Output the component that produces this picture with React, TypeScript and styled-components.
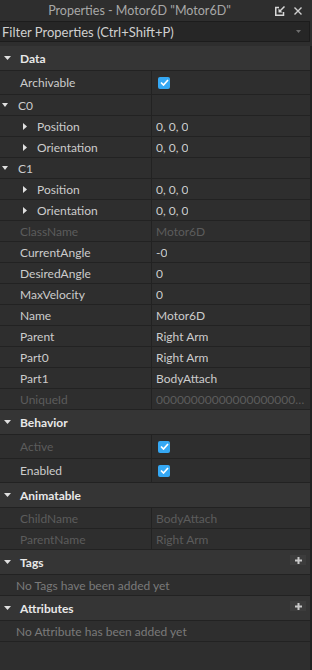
import React from "react";
import styled, { createGlobalStyle } from "styled-components";

const Global = createGlobalStyle`
  html, body { margin: 0; padding: 0; background: #2e2e2e; }
  * { box-sizing: border-box; }
`;

const FONT = `"Lato", "Open Sans", sans-serif`;

const Panel = styled.div`
  width: 312px;
  height: 670px;
  background: #2e2e2e;
  display: flex;
  flex-direction: column;
  font-family: ${FONT};
  font-size: 12px;
  color: #cccccc;
  overflow: hidden;
`;

const TitleBar = styled.div`
  height: 21px;
  display: flex;
  align-items: center;
  background: #2e2e2e;
`;

const Title = styled.div`
  flex: 1;
  text-align: center;
  color: #a8a8a8;
  font-size: 12.5px;
  padding-left: 4px;
`;

const TitleButtons = styled.div`
  display: flex;
  align-items: center;
  gap: 9px;
  padding-right: 10px;
`;

const FilterBar = styled.div`
  height: 21px;
  display: flex;
  align-items: center;
  justify-content: space-between;
  background: #262626;
  border: 1px solid #1c1c1c;
  border-left: none;
  margin-right: 2px;
  padding: 0 8px 0 2px;
  color: #d0d0d0;
  font-size: 13px;
`;

const List = styled.div`
  margin-top: 4px;
  flex: 1;
  border-right: 2px solid #222;
  display: flex;
  flex-direction: column;
`;

const Header = styled.div`
  height: 25px;
  display: flex;
  align-items: center;
  background: #353535;
  border-bottom: 1px solid #222;
  font-weight: 700;
  color: #e8e8e8;
  position: relative;
`;

const HeaderArrow = styled.span`
  width: 20px;
  display: flex;
  justify-content: center;
  padding-right: 6px;
`;

const AddButton = styled.div`
  position: absolute;
  right: 4px;
  top: 5px;
  width: 16px;
  height: 10px;
  background: #3c3c3c;
  display: flex;
  align-items: center;
  justify-content: center;
`;

const Row = styled.div<{ $tall?: boolean }>`
  height: ${(p) => (p.$tall ? 24 : 21)}px;
  display: grid;
  grid-template-columns: 152px 1fr;
  border-bottom: 1px solid #222;
`;

const NameCell = styled.div<{ $indent: number; $disabled?: boolean }>`
  display: flex;
  align-items: center;
  padding-left: ${(p) => p.$indent}px;
  border-right: 1px solid #222;
  color: ${(p) => (p.$disabled ? "#5c5c5c" : "#cccccc")};
  white-space: nowrap;
  overflow: hidden;
`;

const Toggle = styled.span<{ $left: number }>`
  width: ${(p) => 20 - p.$left}px;
  padding-left: ${(p) => p.$left}px;
  display: flex;
  align-items: center;
  margin-left: -20px;
`;

const ValueCell = styled.div<{ $disabled?: boolean }>`
  display: flex;
  align-items: center;
  padding-left: 4px;
  padding-right: 2px;
  color: ${(p) => (p.$disabled ? "#5c5c5c" : "#cccccc")};
  white-space: nowrap;
  overflow: hidden;
  min-width: 0;
`;

const Ellipsis = styled.span`
  overflow: hidden;
  text-overflow: ellipsis;
  white-space: nowrap;
`;

const CheckBox = styled.span`
  width: 12px;
  height: 12px;
  margin-left: 2px;
  border-radius: 2px;
  background: #35a8f4;
  display: flex;
  align-items: center;
  justify-content: center;
`;

const EmptyNote = styled.div`
  height: 21px;
  display: flex;
  align-items: center;
  padding-left: 16px;
  color: #7a7a7a;
  border-bottom: 1px solid #222;
`;

const DownTri = ({ w = 7, h = 4, c = "#e0e0e0" }: { w?: number; h?: number; c?: string }) => (
  <svg width={w} height={h} viewBox={`0 0 ${w} ${h}`}>
    <polygon points={`0,0 ${w},0 ${w / 2},${h}`} fill={c} />
  </svg>
);

const RightTri = () => (
  <svg width={4} height={7} viewBox="0 0 4 7">
    <polygon points="0,0 4,3.5 0,7" fill="#e0e0e0" />
  </svg>
);

const Check = () => (
  <svg width={9} height={7} viewBox="0 0 9 7">
    <polyline points="1,3.5 3.5,6 8,1" fill="none" stroke="#fff" strokeWidth={1.7} />
  </svg>
);

const Plus = () => (
  <svg width={7} height={7} viewBox="0 0 7 7">
    <rect x={0} y={2.5} width={7} height={2} fill="#c8c8c8" />
    <rect x={2.5} y={0} width={2} height={7} fill="#c8c8c8" />
  </svg>
);

type Prop = {
  name: string;
  value?: string;
  check?: boolean;
  disabled?: boolean;
  level?: number;
  toggle?: "open" | "closed";
};

const PropRow = ({ name, value, check, disabled, level = 0, toggle }: Prop) => {
  const indent = 20 + level * 20;
  return (
    <Row $tall={check}>
      <NameCell $indent={indent} $disabled={disabled}>
        {toggle && (
          <Toggle $left={toggle === "open" ? 2 : 3}>
            {toggle === "open" ? <DownTri w={6} h={4} /> : <RightTri />}
          </Toggle>
        )}
        {name}
      </NameCell>
      <ValueCell $disabled={disabled}>
        {check ? (
          <CheckBox>
            <Check />
          </CheckBox>
        ) : (
          <Ellipsis>{value}</Ellipsis>
        )}
      </ValueCell>
    </Row>
  );
};

const Section = ({ title, add }: { title: string; add?: boolean }) => (
  <Header>
    <HeaderArrow>
      <DownTri />
    </HeaderArrow>
    {title}
    {add && (
      <AddButton>
        <Plus />
      </AddButton>
    )}
  </Header>
);

export default function App() {
  return (
    <>
      <Global />
      <Panel>
        <TitleBar>
          <Title>Properties - Motor6D "Motor6D"</Title>
          <TitleButtons>
            <svg width={10} height={10} viewBox="0 0 10 10">
              <path d="M4 1.5 H0.75 V9.25 H8.5 V6" fill="none" stroke="#d8d8d8" strokeWidth={1.5} />
              <path d="M9.5 0.5 L4.5 5.5" stroke="#d8d8d8" strokeWidth={1.5} />
              <polygon points="3.5,2.5 3.5,6.5 7.5,6.5" fill="#d8d8d8" />
            </svg>
            <svg width={8} height={8} viewBox="0 0 8 8">
              <path d="M0.5 0.5 L7.5 7.5 M7.5 0.5 L0.5 7.5" stroke="#d0d0d0" strokeWidth={1.4} />
            </svg>
          </TitleButtons>
        </TitleBar>
        <FilterBar>
          <span>Filter Properties (Ctrl+Shift+P)</span>
          <DownTri w={5} h={3} c="#6e6e6e" />
        </FilterBar>
        <List>
          <Section title="Data" />
          <PropRow name="Archivable" check />
          <PropRow name="C0" toggle="open" />
          <PropRow name="Position" value="0, 0, 0" level={1} toggle="closed" />
          <PropRow name="Orientation" value="0, 0, 0" level={1} toggle="closed" />
          <PropRow name="C1" toggle="open" />
          <PropRow name="Position" value="0, 0, 0" level={1} toggle="closed" />
          <PropRow name="Orientation" value="0, 0, 0" level={1} toggle="closed" />
          <PropRow name="ClassName" value="Motor6D" disabled />
          <PropRow name="CurrentAngle" value="-0" />
          <PropRow name="DesiredAngle" value="0" />
          <PropRow name="MaxVelocity" value="0" />
          <PropRow name="Name" value="Motor6D" />
          <PropRow name="Parent" value="Right Arm" />
          <PropRow name="Part0" value="Right Arm" />
          <PropRow name="Part1" value="BodyAttach" />
          <PropRow name="UniqueId" value="00000000000000000000000000000000" disabled />
          <Section title="Behavior" />
          <PropRow name="Active" check disabled />
          <PropRow name="Enabled" check />
          <Section title="Animatable" />
          <PropRow name="ChildName" value="BodyAttach" disabled />
          <PropRow name="ParentName" value="Right Arm" disabled />
          <Section title="Tags" add />
          <EmptyNote>No Tags have been added yet</EmptyNote>
          <Section title="Attributes" add />
          <EmptyNote>No Attribute has been added yet</EmptyNote>
        </List>
      </Panel>
    </>
  );
}
